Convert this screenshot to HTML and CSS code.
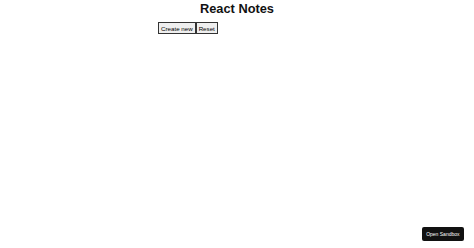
FILE: index.html
```html
<!DOCTYPE html>
<html>
<head>
<meta charset="utf-8">
<link rel="stylesheet" href="styles.css">
</head>
<body>
<div class="app">
  <h1 class="title">React Notes</h1>
  <div class="actions">
    <button class="btn">Create new</button><button class="btn">Reset</button>
  </div>
</div>
<a class="sandbox">Open Sandbox</a>
</body>
</html>
```
FILE: styles.css
```css
html, body { margin: 0; padding: 0; background: #fff; }
body { font-family: "Liberation Sans", Arial, sans-serif; width: 474px; height: 248px; overflow: hidden; }
.app { width: 158px; margin: 0 auto; padding-top: 1px; }
.title { margin: 0; font-size: 12.8px; font-weight: bold; text-align: center; line-height: 16px; color: #111; }
.actions { display: flex; margin-top: 5px; }
.btn { font-family: "Liberation Sans", Arial, sans-serif; font-size: 6.2px; line-height: 7px; padding: 1px 2px; margin: 0; background: #efefef; border: 1px solid #333; color: #000; height: 12px; }
.sandbox { position: fixed; right: 10px; bottom: 7px; background: #111; color: #fff; font-size: 5px; border-radius: 2px; padding: 0 4.5px; height: 14px; line-height: 14px; display: block; }
```
